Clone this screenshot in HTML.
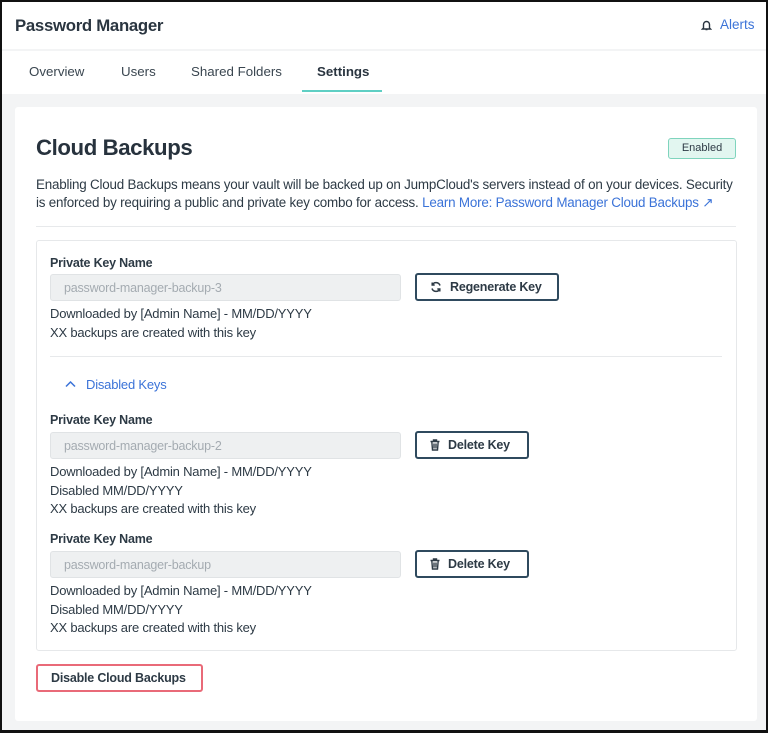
<!DOCTYPE html>
<html><head><style>
*{box-sizing:border-box;margin:0;padding:0}
body{width:768px;height:733px;overflow:hidden;font-family:"Liberation Sans",sans-serif;color:#2a3540;background:#fff;position:relative}
.frame{position:absolute;left:0;top:0;width:768px;height:733px;border:2px solid #111;border-bottom-width:3px;background:#f3f4f5}
.a{position:absolute;white-space:nowrap}
.hdr{position:absolute;left:0;top:0;width:764px;height:47px;background:#fff}
.tabs{position:absolute;left:0;top:49px;width:764px;height:43px;background:#fff}
.card{position:absolute;left:13px;top:105px;width:742px;height:614px;background:#fff;border-radius:3px}
.t{font-size:13px;color:#2d3a45;letter-spacing:-.2px}
.lbl{font-size:12.5px;font-weight:bold;color:#2d3a45;letter-spacing:-.2px}
.inp{position:absolute;width:351px;height:27px;background:#eef0f1;border:1px solid #e0e3e5;border-radius:3px;font-size:12.5px;color:#a4abb1;padding:6px 13px;letter-spacing:-.2px}
.btn{position:absolute;height:28px;border:2px solid #2f4a5e;border-radius:3px;font-size:12.5px;font-weight:bold;color:#2d3a45;display:flex;align-items:center;padding-left:13px;gap:8px;letter-spacing:-.2px}
</style></head><body>
<div class="frame">
<div class="hdr"></div>
<div class="a" style="left:13px;top:14px;font-size:16.8px;font-weight:bold;color:#2a3540;letter-spacing:-.3px">Password Manager</div>
<svg class="a" style="left:699px;top:17px" width="11" height="12" viewBox="0 0 11 12"><path d="M2.5 9V5.5a3 3 0 0 1 6 0V9l1 1H1.5z M4.5 10.5h2" fill="none" stroke="#2a3540" stroke-width="1.4"/></svg>
<div class="a" style="left:718px;top:15px;font-size:13.5px;color:#3b73d8">Alerts</div>
<div class="tabs"></div>
<div class="a" style="left:27px;top:62px;font-size:13.3px;color:#3a4650">Overview</div>
<div class="a" style="left:119px;top:62px;font-size:13.3px;color:#3a4650">Users</div>
<div class="a" style="left:189px;top:62px;font-size:13.3px;color:#3a4650">Shared Folders</div>
<div class="a" style="left:315px;top:62px;font-size:13.3px;font-weight:bold;color:#2a3540">Settings</div>
<div class="a" style="left:300px;top:88px;width:80px;height:2px;background:#5fcfc4"></div>
<div class="card"></div>
<div class="a" style="left:34px;top:133px;font-size:22.2px;font-weight:bold;color:#27323d;letter-spacing:-.4px">Cloud Backups</div>
<div class="a" style="left:666px;top:136px;width:68px;height:21px;background:#e2f6f0;border:1px solid #7fd4bd;border-radius:3px;font-size:11px;color:#2d3a45;text-align:center;line-height:19px">Enabled</div>
<div class="a t" style="left:34px;top:174px;line-height:18px;font-size:13.4px">Enabling Cloud Backups means your vault will be backed up on JumpCloud's servers instead of on your devices. Security<br>is enforced by requiring a public and private key combo for access. <span style="color:#3b73d8">Learn More: Password Manager Cloud Backups ↗</span></div>
<div class="a" style="left:34px;top:224px;width:700px;height:1px;background:#e7e9eb"></div>
<div class="a" style="left:34px;top:238px;width:701px;height:411px;border:1px solid #e6e8ea;border-radius:3px"></div>
<div class="a lbl" style="left:48px;top:254px">Private Key Name</div>
<div class="inp" style="left:48px;top:272px">password-manager-backup-3</div>
<div class="btn" style="left:413px;top:271px;width:144px"><svg width="12" height="12" viewBox="0 0 12 12"><path d="M10 4.5A4.2 4.2 0 0 0 2.2 4M2 7.5a4.2 4.2 0 0 0 7.8.5M2.2 1.5V4h2.5M9.8 10.5V8H7.3" fill="none" stroke="#2d3a45" stroke-width="1.5"/></svg>Regenerate Key</div>
<div class="a t" style="left:48px;top:304px">Downloaded by [Admin Name] - MM/DD/YYYY</div>
<div class="a t" style="left:48px;top:323px">XX backups are created with this key</div>
<div class="a" style="left:48px;top:354px;width:672px;height:1px;background:#e7e9eb"></div>
<svg class="a" style="left:63px;top:378px" width="11" height="8" viewBox="0 0 11 8"><path d="M1 6.5l4.5-4.5 4.5 4.5" fill="none" stroke="#3b73d8" stroke-width="1.5"/></svg>
<div class="a" style="left:84px;top:375px;font-size:13px;color:#3b73d8;letter-spacing:-.2px">Disabled Keys</div>
<div class="a lbl" style="left:48px;top:411px">Private Key Name</div>
<div class="inp" style="left:48px;top:430px">password-manager-backup-2</div>
<div class="btn" style="left:413px;top:429px;width:114px"><svg width="10" height="12" viewBox="0 0 10 12"><path d="M0.5 2.5h9M3.5 2.5V1h3v1.5M1.8 2.5l.7 8.5h5l.7-8.5M4 4.5v5M6 4.5v5" fill="none" stroke="#2d3a45" stroke-width="1.4"/></svg>Delete Key</div>
<div class="a t" style="left:48px;top:462px">Downloaded by [Admin Name] - MM/DD/YYYY</div>
<div class="a t" style="left:48px;top:481px">Disabled MM/DD/YYYY</div>
<div class="a t" style="left:48px;top:499px">XX backups are created with this key</div>
<div class="a lbl" style="left:48px;top:530px">Private Key Name</div>
<div class="inp" style="left:48px;top:549px">password-manager-backup</div>
<div class="btn" style="left:413px;top:548px;width:114px"><svg width="10" height="12" viewBox="0 0 10 12"><path d="M0.5 2.5h9M3.5 2.5V1h3v1.5M1.8 2.5l.7 8.5h5l.7-8.5M4 4.5v5M6 4.5v5" fill="none" stroke="#2d3a45" stroke-width="1.4"/></svg>Delete Key</div>
<div class="a t" style="left:48px;top:581px">Downloaded by [Admin Name] - MM/DD/YYYY</div>
<div class="a t" style="left:48px;top:600px">Disabled MM/DD/YYYY</div>
<div class="a t" style="left:48px;top:618px">XX backups are created with this key</div>
<div class="btn" style="left:34px;top:662px;width:167px;border-color:#e96a78">Disable Cloud Backups</div>
</div>
</body></html>
